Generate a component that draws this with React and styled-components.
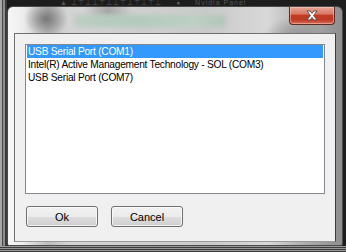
import React, { useState } from 'react';
import styled, { createGlobalStyle } from 'styled-components';

const GlobalStyle = createGlobalStyle`
  html, body {
    margin: 0;
    padding: 0;
    width: 346px;
    height: 252px;
    overflow: hidden;
  }
  body {
    font-family: "Liberation Sans", Arial, sans-serif;
    background: #1d1d1d;
  }
`;

const Screen = styled.div`
  position: relative;
  width: 346px;
  height: 252px;
  box-sizing: border-box;
  padding: 6px 3px 6px 7px;
  background:
    repeating-linear-gradient(
      180deg,
      #9a9a9a 0px,
      #9a9a9a 1px,
      #3c3c3c 1px,
      #3c3c3c 2px
    ) 0 246px / 100% 6px no-repeat,
    linear-gradient(90deg, #a8a8a8 0, #a8a8a8 2px, #4a4a4a 2px, #4a4a4a 3px, #8c8c8c 3px, #8c8c8c 5px, #3a3a3a 5px, #3a3a3a 7px, transparent 7px),
    #1d1d1d;
`;

const TopStrip = styled.div`
  position: absolute;
  top: 0;
  left: 60px;
  right: 0;
  height: 6px;
  display: flex;
  gap: 14px;
  align-items: flex-end;
  overflow: hidden;
  font-size: 7px;
  line-height: 6px;
  color: #555555;
  letter-spacing: 1px;
  white-space: nowrap;
`;

const Window = styled.div`
  height: 240px;
  display: flex;
  flex-direction: column;
  border-radius: 6px 6px 2px 2px;
  border: 1px solid #4a4a4a;
  box-sizing: border-box;
  overflow: hidden;
  background:
    radial-gradient(ellipse 22px 18px at 38px 12px, rgba(90, 90, 90, 0.7), transparent),
    radial-gradient(ellipse 30px 20px at 285px 30px, rgba(120, 120, 120, 0.6), transparent),
    radial-gradient(ellipse 24px 16px at 100px 4px, rgba(120, 120, 120, 0.5), transparent),
    linear-gradient(90deg, #f7f7f7 0, #ededed 15px, #bdbdbd 40px, #d4d4d4 60px, #cacaca 200px, #d8d8d8 260px, #aaaaaa 300px, #8d8d8d 336px);
`;

const TitleBar = styled.div`
  height: 26px;
  display: flex;
  align-items: flex-start;
  justify-content: space-between;
  padding: 0 7px 0 66px;
`;

const BlurredTitle = styled.div`
  width: 152px;
  height: 12px;
  margin-top: 8px;
  background: linear-gradient(90deg, #bccdc2, #b1cbbb 40%, #bcd0c3 80%, #b2c4b8);
  filter: blur(2.5px);
`;

const CloseButton = styled.button`
  width: 46px;
  height: 18px;
  padding: 0;
  display: flex;
  align-items: center;
  justify-content: center;
  border: 1px solid #5e2a22;
  border-top: none;
  border-radius: 0 0 4px 4px;
  background: linear-gradient(
    180deg,
    #e6a797 0%,
    #d77a64 40%,
    #c23a22 50%,
    #bf3a24 75%,
    #d86e56 100%
  );
  box-shadow: inset 0 0 0 1px rgba(255, 220, 210, 0.45);
`;

const Client = styled.div`
  flex: 1;
  margin: 0 6px 3px 6px;
  border: 1px solid #6f6f6f;
  border-right-color: #3c3c3c;
  border-bottom-color: #9a9a9a;
  background: #f0f0f0;
  display: flex;
  flex-direction: column;
  padding: 10px 10px 0 10px;
`;

const ListBox = styled.ul`
  list-style: none;
  margin: 0;
  padding: 0 1px;
  width: 300px;
  height: 150px;
  box-sizing: border-box;
  border: 1px solid #828790;
  background: #ffffff;
`;

const ListItem = styled.li`
  height: 13px;
  line-height: 13px;
  padding-left: 1px;
  font-size: 10.2px;
  letter-spacing: -0.25px;
  color: ${(p) => (p.selected ? '#ffffff' : '#000000')};
  background: ${(p) => (p.selected ? '#3399ff' : 'transparent')};
  white-space: nowrap;
  cursor: default;
`;

const ButtonRow = styled.div`
  display: flex;
  gap: 13px;
  margin-top: 12px;
  padding-left: 1px;
`;

const DialogButton = styled.button`
  width: 72px;
  height: 21px;
  padding: 0;
  font-family: "Liberation Sans", Arial, sans-serif;
  font-size: 11px;
  color: #000;
  border: 1px solid #707070;
  border-radius: 3px;
  background: linear-gradient(180deg, #f2f2f2 0%, #ebebeb 50%, #dddddd 51%, #cfcfcf 100%);
  box-shadow: inset 0 0 0 1px rgba(255, 255, 255, 0.7);
`;

const ports = [
  'USB Serial Port (COM1)',
  'Intel(R) Active Management Technology - SOL (COM3)',
  'USB Serial Port (COM7)',
];

const CloseIcon = () => (
  <svg width="14" height="11" viewBox="0 0 14 11">
    <path
      d="M2 1 L5 1 L7 3.4 L9 1 L12 1 L8.6 5.5 L12 10 L9 10 L7 7.6 L5 10 L2 10 L5.4 5.5 Z"
      fill="#ffffff"
      stroke="#4a4a4a"
      strokeWidth="0.9"
      strokeLinejoin="round"
    />
  </svg>
);

const App = () => {
  const [selected, setSelected] = useState(0);
  return (
    <>
      <GlobalStyle />
      <Screen>
        <TopStrip>
          <span>▲ ⊥⊤⊥⊥⊤⊥⊥⊤⊥⊤⊥⊤⊥</span>
          <span>●</span>
          <span>Nvidia Panel</span>
        </TopStrip>
        <Window>
          <TitleBar>
            <BlurredTitle />
            <CloseButton aria-label="Close">
              <CloseIcon />
            </CloseButton>
          </TitleBar>
          <Client>
            <ListBox>
              {ports.map((port, i) => (
                <ListItem key={port} selected={i === selected} onClick={() => setSelected(i)}>
                  {port}
                </ListItem>
              ))}
            </ListBox>
            <ButtonRow>
              <DialogButton>Ok</DialogButton>
              <DialogButton>Cancel</DialogButton>
            </ButtonRow>
          </Client>
        </Window>
      </Screen>
    </>
  );
};

export default App;
